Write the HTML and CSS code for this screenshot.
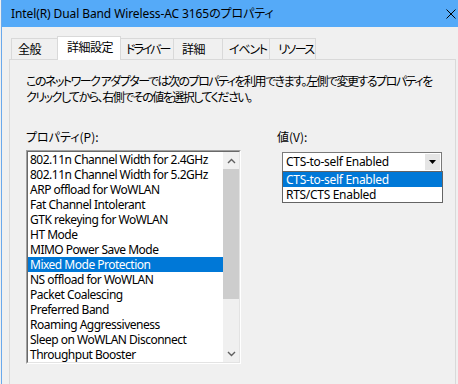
FILE: index.html
```html
<!DOCTYPE html>
<html lang="ja">
<head>
<meta charset="UTF-8">
<title>Intel(R) Dual Band Wireless-AC 3165のプロパティ</title>
<link rel="stylesheet" href="styles.css">
</head>
<body>
<div class="window">
  <div class="titlebar">
    <span class="title">Intel(R) Dual Band Wireless-AC 3165<span class="jp">のプロパティ</span></span>
    <svg class="close" width="10" height="10" viewBox="0 0 10 10"><path d="M0.5 0.5 L9.5 9.5 M9.5 0.5 L0.5 9.5" stroke="#000" stroke-width="1" fill="none"/></svg>
  </div>

  <div class="dialog">
    <div class="tabs">
      <div class="tab tab-general">全般</div>
      <div class="tab tab-advanced active">詳細設定</div>
      <div class="tab tab-driver">ドライバー</div>
      <div class="tab tab-details">詳細</div>
      <div class="tab tab-events">イベント</div>
      <div class="tab tab-resources">リソース</div>
    </div>

    <div class="page">
      <p class="intro">このネットワーク アダプターでは次のプロパティを利用できます。左側で変更するプロパティを<br>クリックしてから、右側でその値を選択してください。</p>

      <div class="fields">
        <div class="field field-prop">
          <label class="jp">プロパティ(P):</label>
          <div class="listbox">
            <div class="listbox-inner">
              <ul class="items">
                <li>802.11n Channel Width for 2.4GHz</li>
                <li>802.11n Channel Width for 5.2GHz</li>
                <li>ARP offload for WoWLAN</li>
                <li>Fat Channel Intolerant</li>
                <li>GTK rekeying for WoWLAN</li>
                <li>HT Mode</li>
                <li>MIMO Power Save Mode</li>
                <li class="selected">Mixed Mode Protection</li>
                <li>NS offload for WoWLAN</li>
                <li>Packet Coalescing</li>
                <li>Preferred Band</li>
                <li>Roaming Aggressiveness</li>
                <li>Sleep on WoWLAN Disconnect</li>
                <li>Throughput Booster</li>
              </ul>
              <div class="scrollbar">
                <div class="sb-btn">
                  <svg width="9" height="6" viewBox="0 0 9 6"><path d="M1 5 L4.5 1.5 L8 5" stroke="#606060" stroke-width="1.4" fill="none"/></svg>
                </div>
                <div class="sb-track"><div class="sb-thumb"></div></div>
                <div class="sb-btn">
                  <svg width="9" height="6" viewBox="0 0 9 6"><path d="M1 1 L4.5 4.5 L8 1" stroke="#606060" stroke-width="1.4" fill="none"/></svg>
                </div>
              </div>
            </div>
          </div>
        </div>

        <div class="field field-value">
          <label class="jp">値(V):</label>
          <div class="combo">
            <span class="combo-text">CTS-to-self Enabled</span>
            <span class="combo-btn">
              <svg width="7" height="4" viewBox="0 0 7 4"><path d="M0 0 H7 L3.5 4 Z" fill="#000"/></svg>
            </span>
            <ul class="dropdown">
              <li class="selected">CTS-to-self Enabled</li>
              <li>RTS/CTS Enabled</li>
            </ul>
          </div>
        </div>
      </div>
    </div>
  </div>
</div>
</body>
</html>
```

FILE: styles.css
```css
* {
  box-sizing: border-box;
}
body {
  margin: 0;
  width: 458px;
  height: 384px;
  overflow: hidden;
  background: #f0f0f0;
  font-family: "Noto Sans", "Noto Sans CJK JP", sans-serif;
  font-size: 12px;
  color: #000;
}
.jp {
  font-family: "Noto Sans CJK JP", sans-serif;
  font-feature-settings: "palt";
}
.window {
  margin-left: 1px;
  height: 384px;
  border-left: 1px solid #6aa9ec;
}
.titlebar {
  height: 27px;
  background: #55aaf8;
  display: flex;
  align-items: center;
  justify-content: space-between;
  padding: 0 2px 0 9px;
}
.title {
  line-height: 16px;
  letter-spacing: -0.1px;
}
.dialog {
  padding: 9px 2px 0 7px;
}

/* tabs */
.tabs {
  display: flex;
  align-items: flex-end;
  height: 23px;
  padding-left: 2px;
  font-family: "Noto Sans CJK JP", sans-serif;
  font-feature-settings: "palt";
}
.tab {
  flex-shrink: 0;
  height: 21px;
  line-height: 19px;
  padding-left: 6px;
  background: #f0f0f0;
  border: 1px solid #d9d9d9;
  border-bottom: none;
  border-right: none;
  white-space: nowrap;
  overflow: hidden;
  letter-spacing: -0.5px;
}
.tab-general { width: 48px; }
.tab-driver { width: 54px; letter-spacing: -2px; }
.tab-details { width: 49px; padding-left: 8px; }
.tab-events { width: 47px; letter-spacing: -1.2px; }
.tab-resources { width: 47px; padding-left: 8px; letter-spacing: -1.5px; border-right: 1px solid #d9d9d9; }
.tab.active {
  position: relative;
  z-index: 1;
  width: 64px;
  height: 24px;
  margin: 0 -2px -1px;
  padding-left: 9px;
  line-height: 20px;
  background: #fff;
  border-right: 1px solid #d9d9d9;
}

/* page */
.page {
  height: 330px;
  border: 1px solid #d9d9d9;
  padding: 13px 16px 0;
}
.intro {
  margin: 0;
  line-height: 16px;
  font-family: "Noto Sans CJK JP", sans-serif;
  font-feature-settings: "palt";
  letter-spacing: -1.5px;
  white-space: nowrap;
}
.fields {
  display: flex;
  margin-top: 24px;
}
.field label {
  display: block;
  height: 16px;
  line-height: 16px;
}
.field-prop {
  width: 215px;
}
.field-value {
  margin-left: 36px;
}

/* listbox */
.listbox {
  margin-top: 5px;
  height: 214px;
  border: 1px solid;
  border-color: #a0a0a0 #fff #fff #a0a0a0;
}
.listbox-inner {
  height: 100%;
  display: flex;
  background: #fff;
  border: 1px solid;
  border-color: #696969 #e3e3e3 #e3e3e3 #696969;
}
.items {
  list-style: none;
  margin: 0;
  padding: 0;
  width: 195px;
  letter-spacing: -0.5px;
}
.items li,
.dropdown li {
  height: 15px;
  line-height: 15px;
  padding-left: 2px;
  white-space: nowrap;
}
.selected {
  background: #0078d7;
  color: #fff;
}
.scrollbar {
  width: 16px;
  display: flex;
  flex-direction: column;
  background: #f0f0f0;
}
.sb-btn {
  height: 17px;
  display: flex;
  align-items: center;
  justify-content: center;
}
.sb-track {
  flex: 1;
}
.sb-thumb {
  height: 130px;
  background: #cdcdcd;
}

/* combo */
.combo {
  position: relative;
  display: flex;
  width: 160px;
  height: 20px;
  margin: 7px 0 0 5px;
  background: #fff;
  border: 1px solid #7a7a7a;
  letter-spacing: -0.3px;
}
.combo-text {
  flex: 1;
  padding-left: 3px;
  line-height: 18px;
}
.combo-btn {
  width: 17px;
  display: flex;
  align-items: center;
  justify-content: center;
  background: #e5e5e5;
  border: 1px solid #fff;
}
.dropdown {
  position: absolute;
  top: 18px;
  left: -1px;
  width: 161px;
  margin: 0;
  padding: 0;
  list-style: none;
  background: #fff;
  border: 1px solid #646464;
}
.dropdown li {
  padding-left: 3px;
}
```
